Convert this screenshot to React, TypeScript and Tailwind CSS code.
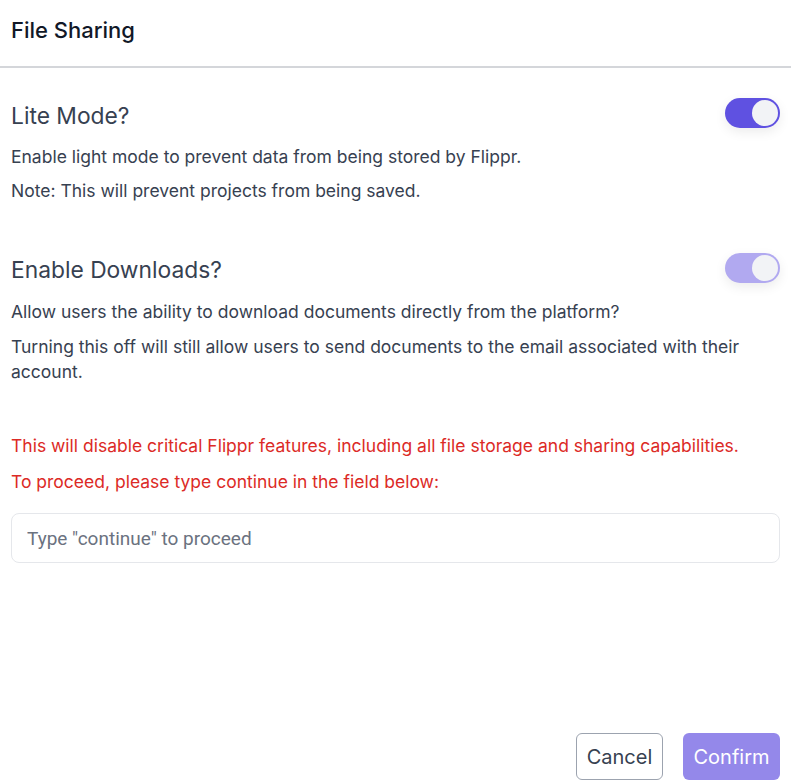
import React, { useState } from "react";

function Toggle({ on, light }: { on: boolean; light?: boolean }) {
  return (
    <div
      className={`relative h-[30px] w-[55px] shrink-0 rounded-full ${light ? "bg-[#b1a9f0]" : "bg-[#5f51e1]"} shadow-[0_4px_12px_rgba(0,0,0,0.08)]`}
    >
      <div
        className={`absolute top-[2px] h-[26px] w-[26px] rounded-full bg-[#f2f3f6] ${on ? "left-[27px]" : "left-[2px]"}`}
      />
    </div>
  );
}

export default function App() {
  const [val, setVal] = useState("");
  return (
    <div
      className="flex h-[782px] w-full flex-col bg-white text-[#374151]"
      style={{ fontFamily: "Inter, 'Noto Sans', sans-serif" }}
    >
      <div className="flex h-[68px] items-center border-b-2 border-[#d4d6da] px-[11px] pb-[6px]">
        <h1 className="text-[22px] font-medium text-[#111827]">File Sharing</h1>
      </div>

      <div className="flex flex-col px-[11px]">
        <div className="mt-[30px] flex h-[30px] items-center justify-between">
          <span className="translate-y-[3px] text-[22.8px] leading-[30px]">Lite Mode?</span>
          <Toggle on />
        </div>
        <p className="mt-[15.5px] text-[17.5px] leading-[25px]">
          Enable light mode to prevent data from being stored by Flippr.
        </p>
        <p className="mt-[9px] text-[17.5px] leading-[25px]">
          Note: This will prevent projects from being saved.
        </p>

        <div className="mt-[50.5px] flex h-[30px] items-center justify-between">
          <span className="translate-y-[2px] text-[22.8px] leading-[30px]">Enable Downloads?</span>
          <Toggle on light />
        </div>
        <p className="mt-[15.5px] text-[17.5px] leading-[25px]">
          Allow users the ability to download documents directly from the platform?
        </p>
        <p className="mt-[10px] text-[17.5px] leading-[25px]">
          Turning this off will still allow users to send documents to the email associated with their account.
        </p>

        <p className="mt-[49px] text-[17.5px] leading-[25px] text-[#dc2a26]">
          This will disable critical Flippr features, including all file storage and sharing capabilities.
        </p>
        <p className="mt-[11px] text-[17.5px] leading-[25px] text-[#dc2a26]">
          To proceed, please type continue in the field below:
        </p>

        <input
          value={val}
          onChange={(e) => setVal(e.target.value)}
          placeholder={'Type "continue" to proceed'}
          className="mt-[19.5px] h-[50px] w-full rounded-[8px] border border-[#e5e7eb] px-[15px] text-[19px] text-[#374151] outline-none placeholder:text-[#6b7280]"
          style={{ fontFamily: "Roboto, Arial, sans-serif" }}
        />
      </div>

      <div className="mt-auto flex justify-end gap-[20px] px-[11px] pb-[2px]">
        <button className="h-[47px] w-[87px] rounded-[6px] border border-[#9ca3af] bg-white text-[20px] text-[#374151]">
          Cancel
        </button>
        <button className="h-[47px] w-[97px] rounded-[6px] bg-[#9488ea] text-[20px] text-white">
          Confirm
        </button>
      </div>
    </div>
  );
}
